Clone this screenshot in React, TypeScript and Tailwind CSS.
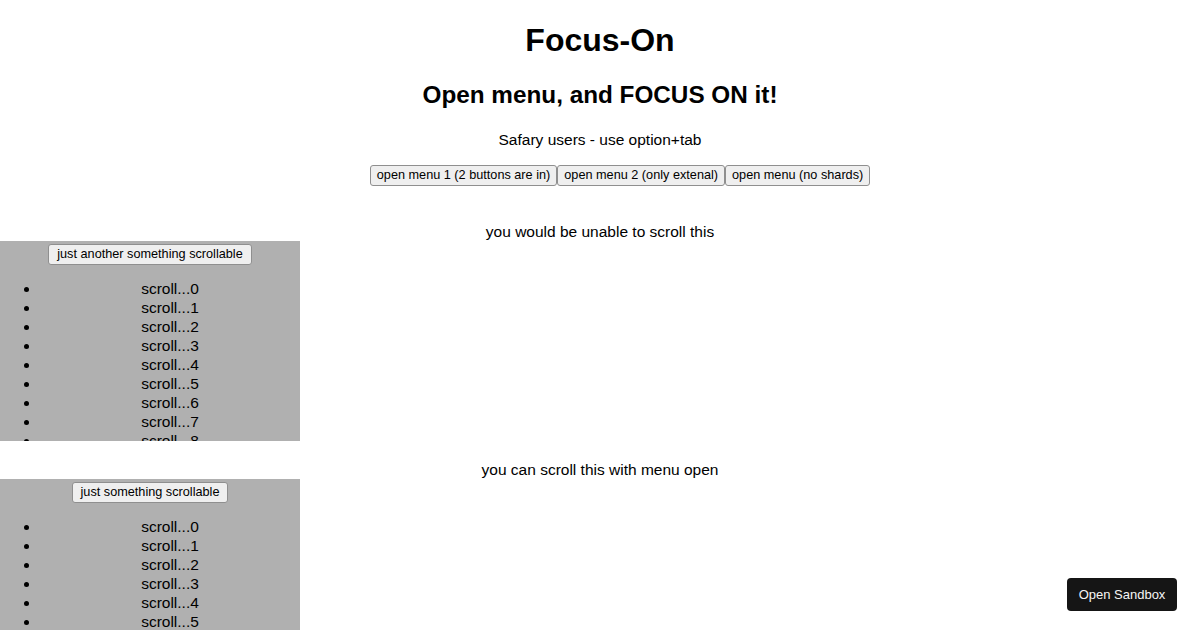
import React from "react";

const items = Array.from({ length: 20 }, (_, i) => i);

const NativeButton: React.FC<{ children: React.ReactNode; className?: string }> = ({
  children,
  className = "",
}) => (
  <button
    className={`h-[21px] bg-[#efefef] border border-[#8f8f8f] rounded-[3px] text-[12.7px] leading-[15px] text-black ${className}`}
  >
    {children}
  </button>
);

const ScrollBox: React.FC<{ label: string }> = ({ label }) => (
  <div className="w-[300px] h-[200px] bg-[#b0b0b0] overflow-hidden text-center">
    <NativeButton className="mt-px px-[8px]">{label}</NativeButton>
    <ul className="mt-[14px] pl-10 list-disc text-[15.5px] leading-[19px]">
      {items.map((i) => (
        <li key={i}>scroll...{i}</li>
      ))}
    </ul>
  </div>
);

export default function App() {
  return (
    <div
      className="relative h-screen overflow-hidden bg-white text-black"
      style={{ fontFamily: '"Liberation Sans", Arial, sans-serif' }}
    >
      <div className="flex flex-col items-center text-center">
        <h1 className="mt-[22px] text-[32px] leading-[37px] font-bold">Focus-On</h1>
        <h2 className="mt-[22px] text-[24.3px] leading-[28px] font-bold">
          Open menu, and FOCUS ON it!
        </h2>
        <p className="mt-[21px] text-[15.5px] leading-[19px]">Safary users - use option+tab</p>
        <div className="mt-4 ml-10 flex">
          <NativeButton className="px-[6px]">open menu 1 (2 buttons are in)</NativeButton>
          <NativeButton className="px-[6px]">open menu 2 (only extenal)</NativeButton>
          <NativeButton className="px-[6px]">open menu (no shards)</NativeButton>
        </div>
      </div>

      <p className="mt-[36px] text-center text-[15.5px] leading-[19px]">
        you would be unable to scroll this
      </p>
      <ScrollBox label="just another something scrollable" />

      <p className="mt-[19px] text-center text-[15.5px] leading-[19px]">
        you can scroll this with menu open
      </p>
      <ScrollBox label="just something scrollable" />

      <button className="absolute right-[23px] bottom-[19px] h-[33px] w-[110px] rounded-[4px] bg-[#151515] text-[13px] text-[#f5f5f5]">
        Open Sandbox
      </button>
    </div>
  );
}
